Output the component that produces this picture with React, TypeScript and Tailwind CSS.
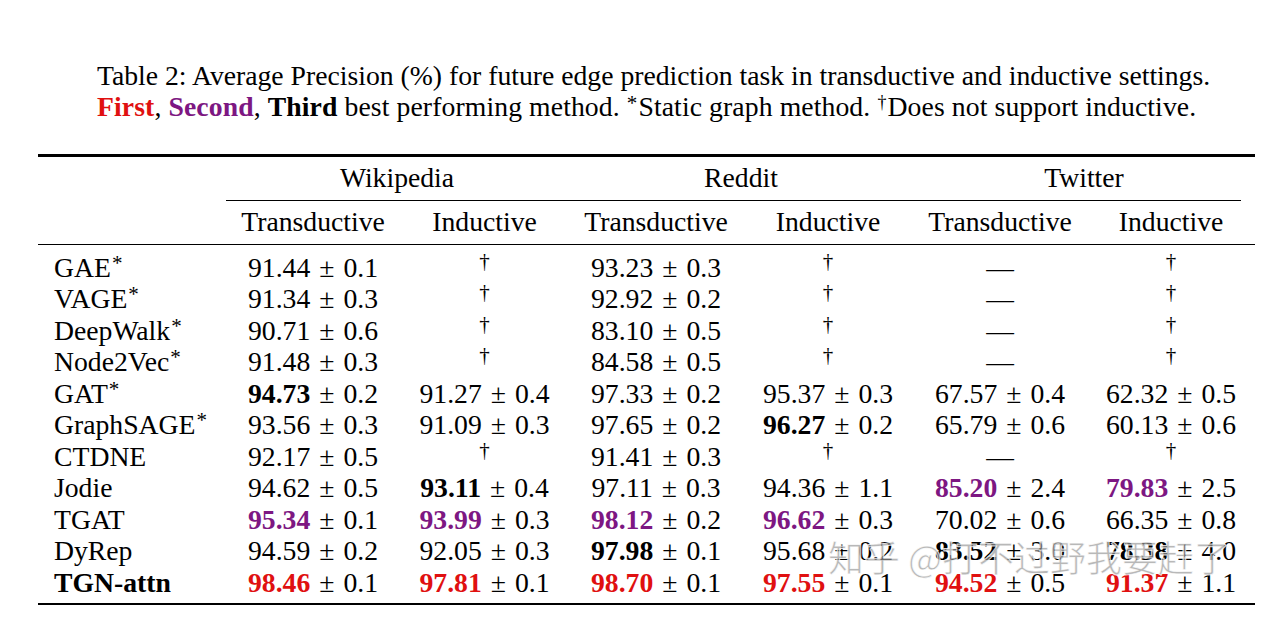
import React from "react";

type Rank = 1 | 2 | 3;
type Val = { v: string; sd: string; r?: Rank };
type Cell = Val | "dag" | "dash";

interface Row {
  name: string;
  star?: boolean;
  bold?: boolean;
  cells: Cell[];
}

const rows: Row[] = [
  { name: "GAE", star: true, cells: [{ v: "91.44", sd: "0.1" }, "dag", { v: "93.23", sd: "0.3" }, "dag", "dash", "dag"] },
  { name: "VAGE", star: true, cells: [{ v: "91.34", sd: "0.3" }, "dag", { v: "92.92", sd: "0.2" }, "dag", "dash", "dag"] },
  { name: "DeepWalk", star: true, cells: [{ v: "90.71", sd: "0.6" }, "dag", { v: "83.10", sd: "0.5" }, "dag", "dash", "dag"] },
  { name: "Node2Vec", star: true, cells: [{ v: "91.48", sd: "0.3" }, "dag", { v: "84.58", sd: "0.5" }, "dag", "dash", "dag"] },
  {
    name: "GAT",
    star: true,
    cells: [
      { v: "94.73", sd: "0.2", r: 3 },
      { v: "91.27", sd: "0.4" },
      { v: "97.33", sd: "0.2" },
      { v: "95.37", sd: "0.3" },
      { v: "67.57", sd: "0.4" },
      { v: "62.32", sd: "0.5" },
    ],
  },
  {
    name: "GraphSAGE",
    star: true,
    cells: [
      { v: "93.56", sd: "0.3" },
      { v: "91.09", sd: "0.3" },
      { v: "97.65", sd: "0.2" },
      { v: "96.27", sd: "0.2", r: 3 },
      { v: "65.79", sd: "0.6" },
      { v: "60.13", sd: "0.6" },
    ],
  },
  { name: "CTDNE", cells: [{ v: "92.17", sd: "0.5" }, "dag", { v: "91.41", sd: "0.3" }, "dag", "dash", "dag"] },
  {
    name: "Jodie",
    cells: [
      { v: "94.62", sd: "0.5" },
      { v: "93.11", sd: "0.4", r: 3 },
      { v: "97.11", sd: "0.3" },
      { v: "94.36", sd: "1.1" },
      { v: "85.20", sd: "2.4", r: 2 },
      { v: "79.83", sd: "2.5", r: 2 },
    ],
  },
  {
    name: "TGAT",
    cells: [
      { v: "95.34", sd: "0.1", r: 2 },
      { v: "93.99", sd: "0.3", r: 2 },
      { v: "98.12", sd: "0.2", r: 2 },
      { v: "96.62", sd: "0.3", r: 2 },
      { v: "70.02", sd: "0.6" },
      { v: "66.35", sd: "0.8" },
    ],
  },
  {
    name: "DyRep",
    cells: [
      { v: "94.59", sd: "0.2" },
      { v: "92.05", sd: "0.3" },
      { v: "97.98", sd: "0.1", r: 3 },
      { v: "95.68", sd: "0.2" },
      { v: "83.52", sd: "3.0", r: 3 },
      { v: "78.38", sd: "4.0", r: 3 },
    ],
  },
  {
    name: "TGN-attn",
    bold: true,
    cells: [
      { v: "98.46", sd: "0.1", r: 1 },
      { v: "97.81", sd: "0.1", r: 1 },
      { v: "98.70", sd: "0.1", r: 1 },
      { v: "97.55", sd: "0.1", r: 1 },
      { v: "94.52", sd: "0.5", r: 1 },
      { v: "91.37", sd: "1.1", r: 1 },
    ],
  },
];

const rankClass = (r?: Rank) => {
  if (r === 1) return "font-bold text-[#e01010]";
  if (r === 2) return "font-bold text-[#7d1782]";
  if (r === 3) return "font-bold";
  return "";
};

const ValueCell = ({ cell }: { cell: Cell }) => {
  if (cell === "dag") {
    return (
      <div className="flex items-start justify-center">
        <span className="text-[21px] leading-none -mt-[13px] text-black">†</span>
      </div>
    );
  }
  if (cell === "dash") {
    return <div className="text-center">—</div>;
  }
  return (
    <div className="flex justify-center items-baseline">
      <span className={rankClass(cell.r)}>{cell.v}</span>
      <span className="mx-[9px]">±</span>
      <span>{cell.sd}</span>
    </div>
  );
};

const cols = "grid grid-cols-[188px_174px_169px_174px_170px_174px_168px]";

export default function App() {
  return (
    <div className="relative w-[1282px] h-[617px] bg-white text-black font-['Liberation_Serif','Times_New_Roman',serif] text-[27.7px] overflow-hidden">
      <div className="pt-[60px] pl-[97px] leading-[31px]">
        <div>Table 2: Average Precision (%) for future edge prediction task in transductive and inductive settings.</div>
        <div className="tracking-[0.1px]">
          <span className="font-bold text-[#e01010]">First</span>,{" "}
          <span className="font-bold text-[#7d1782]">Second</span>,{" "}
          <span className="font-bold">Third</span> best performing method.{" "}
          <span className="relative -top-[6px] text-[21px] mr-[1px]">*</span>Static graph method.{" "}
          <span className="relative -top-[8px] text-[18px] mr-[1px]">†</span>Does not support inductive.
        </div>
      </div>

      <div className="ml-[38px] mt-[28px] w-[1217px]">
        <div className="h-[2.5px] bg-black" />
        <div className={`${cols} h-[43px] items-center pb-[6px]`}>
          <div />
          <div className="col-span-2 text-center pr-[1px]">Wikipedia</div>
          <div className="col-span-2 text-center">Reddit</div>
          <div className="col-span-2 text-center">Twitter</div>
        </div>
        <div className={cols}>
          <div />
          <div className="col-span-6 h-[1px] bg-black mr-[14px]" />
        </div>
        <div className={`${cols} h-[43px] items-center pb-[5px]`}>
          <div />
          <div className="text-center">Transductive</div>
          <div className="text-center">Inductive</div>
          <div className="text-center">Transductive</div>
          <div className="text-center">Inductive</div>
          <div className="text-center">Transductive</div>
          <div className="text-center">Inductive</div>
        </div>
        <div className="h-[1.5px] bg-black" />
        <div className="pt-[7px] pb-[4px]">
          {rows.map((row) => (
            <div key={row.name} className={`${cols} h-[31.5px] items-center leading-none`}>
              <div className={`pl-[16px] ${row.bold ? "font-bold" : ""}`}>
                {row.name}
                {row.star && <span className="relative -top-[7px] text-[21px] ml-[1px]">*</span>}
              </div>
              {row.cells.map((c, i) => (
                <ValueCell key={i} cell={c} />
              ))}
            </div>
          ))}
        </div>
        <div className="h-[2.5px] bg-black" />
      </div>

      <div className="absolute left-[828px] top-[538px] text-[36px] leading-none font-['Noto_Sans_CJK_SC',sans-serif] text-[#999999]/70 [-webkit-text-stroke:1px_rgba(255,255,255,0.8)] pointer-events-none">
        知乎 @打不过野我要赶了
      </div>
    </div>
  );
}
